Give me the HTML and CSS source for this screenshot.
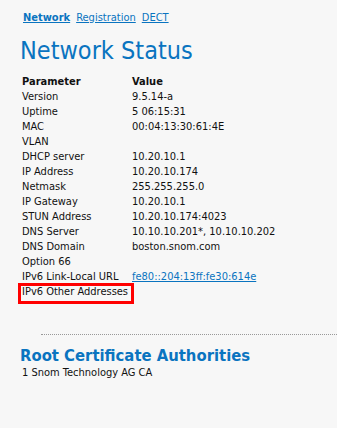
FILE: index.html
```html
<html>
    <head>
        <meta charset="utf-8">
        <link rel="stylesheet" href="styles.css">
    </head>
    <body>
        <div class='page'>
            <div class='tabs'>
                <a href='#' class='tab active'>Network</a>
                <a href='#' class='tab'>Registration</a>
                <a href='#' class='tab'>DECT</a>
            </div>
            <h1 class='title'>Network Status</h1>
            <table class='status'>
                <tr><th>Parameter</th><th>Value</th></tr>
                <tr><td>Version</td><td>9.5.14-a</td></tr>
                <tr><td>Uptime</td><td>5 06:15:31</td></tr>
                <tr><td>MAC</td><td>00:04:13:30:61:4E</td></tr>
                <tr><td>VLAN</td><td></td></tr>
                <tr><td>DHCP server</td><td>10.20.10.1</td></tr>
                <tr><td>IP Address</td><td>10.20.10.174</td></tr>
                <tr><td>Netmask</td><td>255.255.255.0</td></tr>
                <tr><td>IP Gateway</td><td>10.20.10.1</td></tr>
                <tr><td>STUN Address</td><td>10.20.10.174:4023</td></tr>
                <tr><td>DNS Server</td><td>10.10.10.201*, 10.10.10.202</td></tr>
                <tr><td>DNS Domain</td><td>boston.snom.com</td></tr>
                <tr><td>Option 66</td><td></td></tr>
                <tr><td>IPv6 Link-Local URL</td><td><a href='#'>fe80::204:13ff:fe30:614e</a></td></tr>
                <tr><td class='marked'>IPv6 Other Addresses</td><td></td></tr>
            </table>
            <div class='divider'></div>
            <h2 class='subtitle'>Root Certificate Authorities</h2>
            <div class='cert'>1 Snom Technology AG CA</div>
        </div>
    </body>
</html>
```

FILE: styles.css
```css
body {
    margin: 0;
    background: #f7f7f7;
    color: #111;
    font-family: "DejaVu Sans Condensed", "DejaVu Sans", sans-serif;
    font-size: 11px;
}
a {
    color: #0a74c0;
}
.page {
    padding: 10px 0 0 20px;
}
.tabs {
    padding-left: 3px;
    display: flex;
    gap: 6px;
    line-height: 15px;
}
.tab.active {
    font-weight: bold;
}
.title {
    margin: 11px 0 0 0;
    font-size: 25px;
    font-weight: normal;
    color: #0a74c0;
    line-height: 30px;
}
.status {
    border-collapse: collapse;
    margin: 8px 0 0 2px;
    white-space: nowrap;
}
.status th, .status td {
    padding: 0;
    text-align: left;
    line-height: 15px;
    font-size: 11px;
}
.status th {
    font-weight: bold;
}
.status tr > :first-child {
    width: 110px;
}
.marked {
    position: relative;
}
.marked::after {
    content: '';
    position: absolute;
    left: -4px;
    top: -1px;
    width: 116px;
    height: 21px;
    border: 3px solid #f00;
    box-sizing: border-box;
}
.divider {
    margin: 35px 0 0 21px;
    border-top: 1px dotted #999;
}
.subtitle {
    margin: 12px 0 0 0;
    font-size: 16.5px;
    color: #0a74c0;
    line-height: 18px;
}
.cert {
    padding-left: 2px;
    line-height: 15px;
}
```
